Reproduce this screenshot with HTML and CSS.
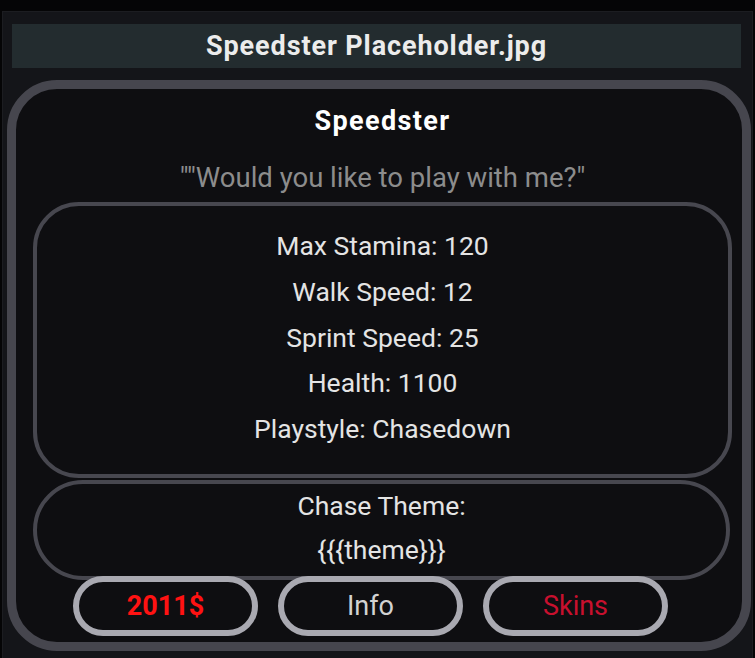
FILE: index.html
```html
<!DOCTYPE html>
<html lang="en">
<head>
    <meta charset="UTF-8">
    <meta name="viewport" content="width=device-width, initial-scale=1.0">
    <title>Speedster</title>
    <link rel="stylesheet" href="styles.css">
</head>
<body>
    <div class="frame">
        <!-- Image caption bar -->
        <div class="titlebar">Speedster Placeholder.jpg</div>

        <div class="card">
            <div class="name">Speedster</div>
            <div class="quote">""Would you like to play with me?"</div>

            <!-- Stats -->
            <div class="box stats">
                <div class="row">Max Stamina: 120</div>
                <div class="row">Walk Speed: 12</div>
                <div class="row">Sprint Speed: 25</div>
                <div class="row">Health: 1100</div>
                <div class="row">Playstyle: Chasedown</div>
            </div>

            <!-- Theme -->
            <div class="box theme">
                <div class="row">Chase Theme:</div>
                <div class="row">{{{theme}}}</div>
            </div>

            <div class="buttons">
                <div class="btn price">2011$</div>
                <div class="btn info">Info</div>
                <div class="btn skins">Skins</div>
            </div>
        </div>
    </div>
</body>
</html>
```

FILE: styles.css
```css
html, body {
    margin: 0;
    height: 100%;
}
body {
    background: #050506;
    font-family: Roboto, "Liberation Sans", sans-serif;
    overflow: hidden;
}
.frame {
    box-sizing: border-box;
    margin: 11px 2px 0 2px;
    height: calc(100% - 11px);
    background: #141519;
    border: 1px solid #1c1d21;
    border-bottom: none;
    padding: 12px 1px 0 4px;
}
.titlebar {
    margin: 0 10px 0 5px;
    height: 44px;
    background: #232c2f;
    color: #ececec;
    font-weight: 700;
    font-size: 27px;
    letter-spacing: 0.9px;
    display: flex;
    align-items: center;
    justify-content: center;
}
.card {
    margin-top: 12px;
    background: #0e0e11;
    border: 9px solid #46464e;
    border-radius: 50px;
    padding: 0 10px 6px 17px;
    text-align: center;
    color: #e4e4e4;
    font-size: 26.5px;
}
.name {
    padding-top: 18px;
    line-height: 28px;
    font-size: 27px;
    font-weight: 700;
    color: #ffffff;
    letter-spacing: 1.4px;
}
.quote {
    margin-top: 29px;
    line-height: 28px;
    font-size: 27.5px;
    color: #8c8c8c;
}
.box {
    border: 4px solid #47474f;
    background: #0e0e11;
}
.stats {
    margin-top: 10px;
    border-radius: 46px;
    padding: 17px 0 22px 0;
}
.stats .row {
    line-height: 45.75px;
}
.theme {
    margin: 2px 2px 0 0;
    border-radius: 50px;
    padding-bottom: 4px;
}
.theme .row {
    line-height: 44px;
}
.buttons {
    position: relative;
    display: flex;
    gap: 20px;
    margin-top: -4px;
    padding-left: 40px;
}
.btn {
    box-sizing: border-box;
    width: 185px;
    height: 60px;
    border: 6px solid #a9a9b1;
    border-radius: 30px;
    background: #0e0e11;
    display: flex;
    align-items: center;
    justify-content: center;
    font-size: 27px;
}
.price {
    color: #ff1212;
    font-weight: 700;
}
.info {
    color: #d2d2d2;
}
.skins {
    color: #c8102e;
}
```
